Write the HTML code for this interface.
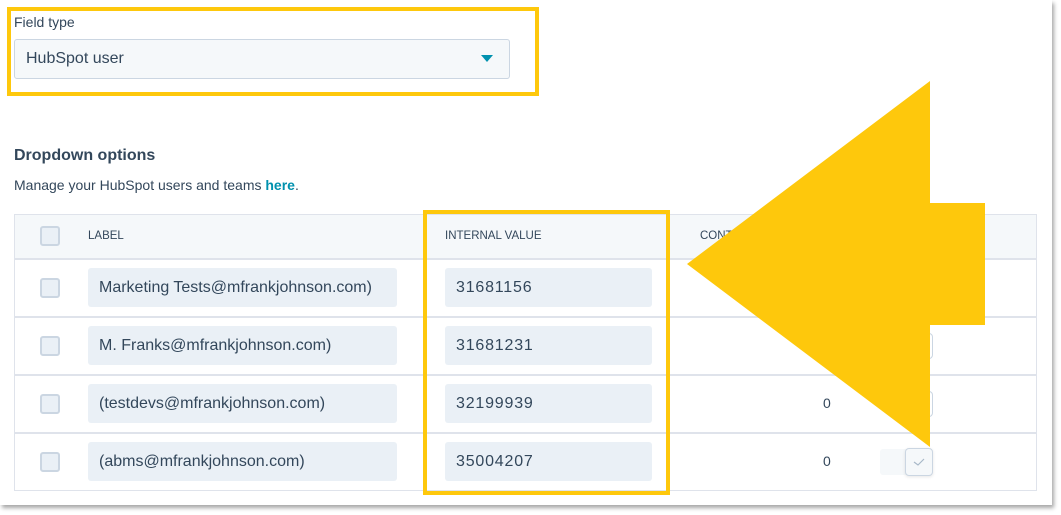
<!DOCTYPE html>
<html><head><style>
*{margin:0;padding:0;box-sizing:border-box}
body{width:1061px;height:515px;background:#fff;position:relative;overflow:hidden;font-family:"Liberation Sans",sans-serif;color:#33475b}
.page{position:absolute;left:0;top:0;width:1052px;height:505px;background:#fff;box-shadow:2px 3px 4px rgba(0,0,0,.35)}
.a{position:absolute}
.inp{position:absolute;background:#eaf0f6;border-radius:3px;font-size:16px;color:#33475b;padding-left:11px;line-height:39px;height:39px}
.num{letter-spacing:0.8px}
.cb{position:absolute;left:40px;width:20px;height:20px;border:2px solid #cbd6e2;border-radius:3px;background:#eaf0f6}
.row{position:absolute;left:14px;width:1023px;border-top:2px solid #dfe3eb}
.yb{position:absolute;border:4px solid #fec80c}
.zero{position:absolute;left:823px;font-size:14px;color:#33475b}
</style></head><body>
<div class="page">
<div class="a" style="left:14px;top:14px;font-size:14px">Field type</div>
<div class="a" style="left:14px;top:39px;width:496px;height:40px;background:#f5f8fa;border:1px solid #cbd6e2;border-radius:3px;font-size:16px;line-height:38px;padding-left:11px">HubSpot user</div>
<div class="a" style="left:481px;top:55px;width:0;height:0;border-left:6px solid transparent;border-right:6px solid transparent;border-top:7px solid #0091ae"></div>
<div class="yb" style="left:7px;top:7px;width:532px;height:89px"></div>

<div class="a" style="left:14px;top:147px;font-size:16px;font-weight:bold">Dropdown options</div>
<div class="a" style="left:14px;top:177px;font-size:14px">Manage your HubSpot users and teams <b style="color:#0091ae">here</b>.</div>

<div class="a" style="left:14px;top:214px;width:1023px;height:277px;border:1px solid #dfe3eb"></div>
<div class="a" style="left:15px;top:215px;width:1021px;height:44px;background:#f5f8fa"></div>
<div class="cb" style="top:226px"></div>
<div class="a" style="left:88px;top:230px;font-size:11.5px">LABEL</div>
<div class="a" style="left:445px;top:230px;font-size:11.5px">INTERNAL VALUE</div>
<div class="a" style="left:700px;top:230px;font-size:11.5px">CONT</div>

<div class="row" style="top:258px"></div>
<div class="row" style="top:316px"></div>
<div class="row" style="top:374px"></div>
<div class="row" style="top:432px"></div>

<div class="cb" style="top:278px"></div><div class="inp" style="left:88px;top:268px;width:309px">Marketing Tests@mfrankjohnson.com)</div><div class="inp num" style="left:445px;top:268px;width:207px">31681156</div>
<div class="cb" style="top:336px"></div><div class="inp" style="left:88px;top:326px;width:309px">M. Franks@mfrankjohnson.com)</div><div class="inp num" style="left:445px;top:326px;width:207px">31681231</div>
<div class="cb" style="top:394px"></div><div class="inp" style="left:88px;top:384px;width:309px">(testdevs@mfrankjohnson.com)</div><div class="inp num" style="left:445px;top:384px;width:207px">32199939</div>
<div class="cb" style="top:452px"></div><div class="inp" style="left:88px;top:442px;width:309px">(abms@mfrankjohnson.com)</div><div class="inp num" style="left:445px;top:442px;width:207px">35004207</div>

<div class="zero" style="top:395px">0</div>
<div class="zero" style="top:453px">0</div>
<div class="a" style="left:880px;top:449px;width:30px;height:26px;background:#f5f8fa;border-radius:3px"></div>
<div class="a" style="left:905px;top:448px;width:28px;height:28px;background:#f5f8fa;border:1px solid #cbd6e2;border-radius:4px;box-shadow:0 1px 3px rgba(0,0,0,.1)"></div>
<svg class="a" style="left:912px;top:455px" width="14" height="14"><path d="M2 7 L6 10 L12 4" stroke="#a8b8c8" stroke-width="1.2" fill="none"/></svg>
<div class="a" style="left:918px;top:333px;width:15px;height:26px;border:1px solid #cbd6e2;border-left:none;border-radius:0 4px 4px 0"></div>
<div class="a" style="left:918px;top:391px;width:15px;height:26px;border:1px solid #cbd6e2;border-left:none;border-radius:0 4px 4px 0"></div>

<div class="yb" style="left:423px;top:210px;width:247px;height:285px"></div>
<svg class="a" style="left:0;top:0" width="1061" height="515"><polygon points="687,264 930,81 930,203 985,203 985,325 930,325 930,447" fill="#fec80c"/></svg>
</div>
</body></html>
